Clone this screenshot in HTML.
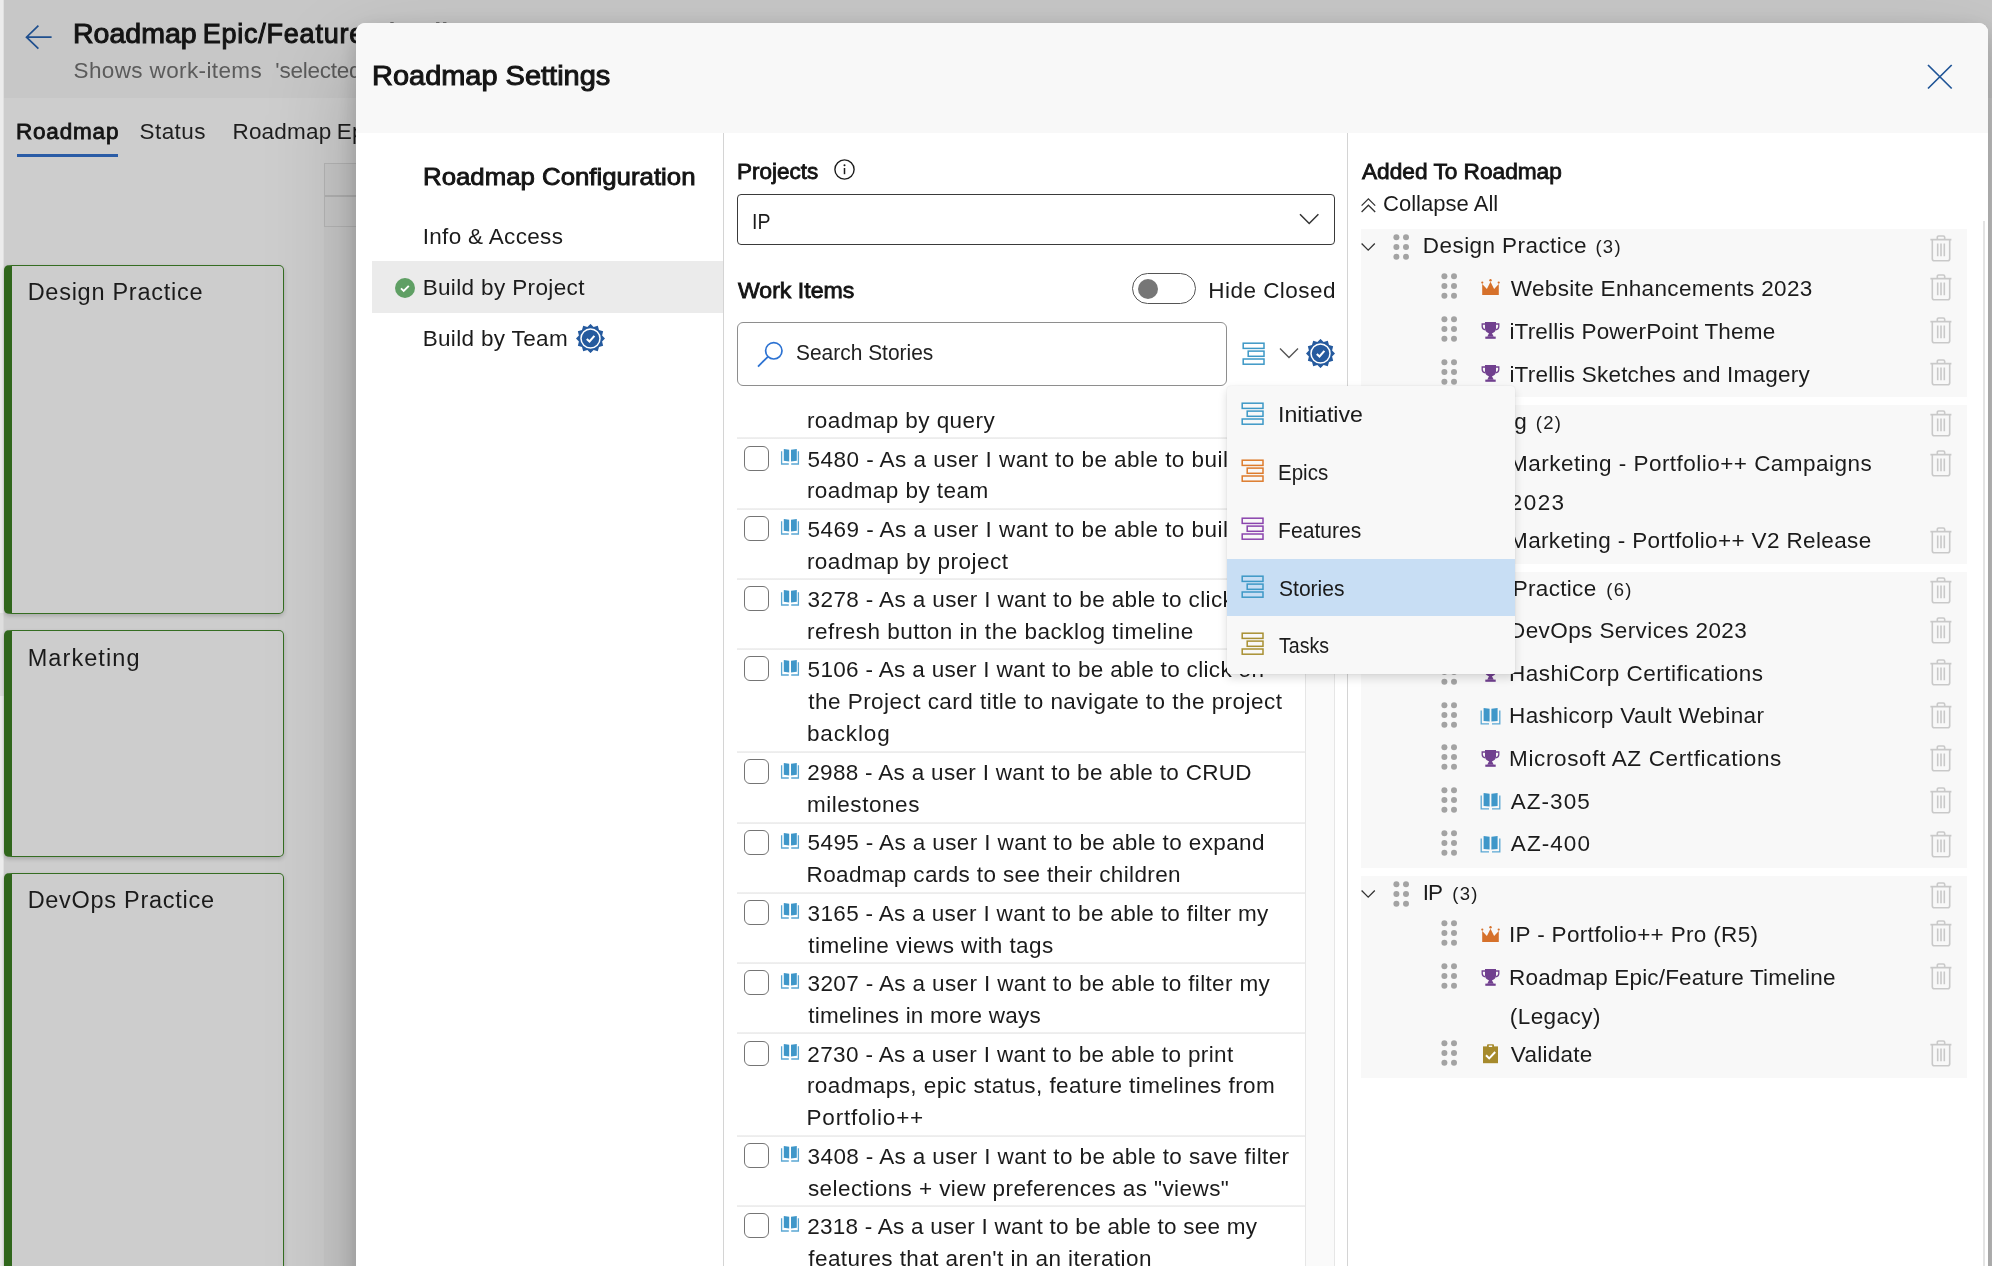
<!DOCTYPE html>
<html lang="en"><head><meta charset="utf-8"><title>Roadmap Settings</title>
<style>
html,body{margin:0;padding:0}
body{width:1992px;height:1266px;overflow:hidden;background:#cdcdcd;font-family:"Liberation Sans", Arial, sans-serif;position:relative;color:#1b1b1b}
.t{position:absolute;white-space:pre;}
.i{position:absolute;overflow:visible}
.cnt{font-size:18px;margin-left:11px;letter-spacing:0}
#bgclip,#panel,#dropdown{position:absolute;left:0;top:0;width:1992px;height:1266px;overflow:hidden}
.g{position:absolute;left:0;top:0;width:1992px;height:1266px;will-change:transform}
</style></head>
<body>

<svg width="0" height="0" style="position:absolute">
<defs>
<symbol id="lvl" viewBox="0 0 27 27"><g fill="none" stroke="currentColor" stroke-width="1.5"><rect x="3.2" y="3.2" width="20.8" height="5.2"/><rect x="8.2" y="11.1" width="15.8" height="5.2"/><rect x="3.2" y="19" width="20.8" height="5.2"/></g></symbol>
<symbol id="badge" viewBox="0 0 29 29"><path fill="#255a9e" d="M14.50 -0.10 L17.61 2.91 L21.80 1.86 L22.99 6.01 L27.14 7.20 L26.09 11.39 L29.10 14.50 L26.09 17.61 L27.14 21.80 L22.99 22.99 L21.80 27.14 L17.61 26.09 L14.50 29.10 L11.39 26.09 L7.20 27.14 L6.01 22.99 L1.86 21.80 L2.91 17.61 L-0.10 14.50 L2.91 11.39 L1.86 7.20 L6.01 6.01 L7.20 1.86 L11.39 2.91z"/><circle cx="14.500" cy="14.500" r="9.500" fill="none" stroke="#fff" stroke-width="1.500"/><path d="M10.800 14.900 13.500 17.400 18.400 11.900" fill="none" stroke="#fff" stroke-width="2.100"/></symbol>
<symbol id="book" viewBox="0 0 20 18"><path d="M1.6 3.2V16h7.2M18.4 3.2V16h-7.2" fill="none" stroke="#5aa7d3" stroke-width="1.3"/><path d="M3.800 1 9.200 1.700V13.500L3.800 12.800z" fill="#3f97c9"/><path d="M16.800 1 11 1.700V13.500l5.800-.700z" fill="#3f97c9"/></symbol>
<symbol id="book2" viewBox="0 0 23 21"><path d="M2.200 4.600V17.800h7.800M20.800 4.600V17.800h-7.800" fill="none" stroke="#5aa7d3" stroke-width="1.300"/><path d="M4.600 2 10.600 2.700V15.600L4.600 14.900z" fill="#3f97c9"/><path d="M18.600 2 12.400 2.700V15.600l6.200-.700z" fill="#3f97c9"/></symbol>
<symbol id="crown" viewBox="0 0 23 21"><path fill="#d6712b" d="M3.200 18V7l4.700 5 3.600-7.200 3.600 7.200 4.700-5V18z"/><circle cx="3.300" cy="5.600" r="1.100" fill="#d6712b"/><circle cx="11.500" cy="3.200" r="1.200" fill="#d6712b"/><circle cx="19.700" cy="5.600" r="1.100" fill="#d6712b"/></symbol>
<symbol id="trophy" viewBox="0 0 23 21"><path fill="#71408f" d="M6 2h11v6.2c0 3-2.3 5.2-5.500 5.200S6 11.200 6 8.200z"/><path d="M6 4H3.200v2.600c0 1.800 1.300 3 3.200 3.200M17 4h2.800v2.600c0 1.800-1.300 3-3.200 3.200" fill="none" stroke="#71408f" stroke-width="1.3"/><path fill="#71408f" d="M10.300 12.500h2.400l2 4.300H8.300z"/><rect x="6.300" y="16.600" width="10.400" height="2.200" fill="#71408f"/></symbol>
<symbol id="task" viewBox="0 0 23 21"><rect x="4" y="3.400" width="15" height="16.800" fill="#a68a2c"/><rect x="8" y="1.200" width="7" height="4" rx="1" fill="#a68a2c"/><rect x="9.800" y="2.500" width="3.400" height="1.500" fill="#f8f8f8"/><path d="M7 12.200 10.200 15.400 16.200 9" fill="none" stroke="#fff" stroke-width="2"/></symbol>
<symbol id="grip" viewBox="0 0 18 28"><g fill="#a3a3a3"><circle cx="4.400" cy="4.200" r="3"/><circle cx="14" cy="4.200" r="3"/><circle cx="4.400" cy="14" r="3"/><circle cx="14" cy="14" r="3"/><circle cx="4.400" cy="23.800" r="3"/><circle cx="14" cy="23.800" r="3"/></g></symbol>
<symbol id="trash" viewBox="0 0 26 30"><g fill="none" stroke="#c9c9c9" stroke-width="1.600"><path d="M2.400 4.600h21M9.300 4.600V2.400q0-1.400 1.400-1.400h4.600q1.400 0 1.400 1.400v2.200M4.300 4.600V23.800q0 2 2 2h13.400q2 0 2-2V4.600"/><path d="M9.700 8.400v12.800M13 8.400v12.800M16.300 8.400v12.800"/></g></symbol>
</defs></svg>

<div id="bgclip">
<div style="position:absolute;left:0px;top:0px;width:1992px;height:98px;background:#c7c7c7"></div>
<div style="position:absolute;left:0px;top:0px;width:4px;height:1266px;background:linear-gradient(90deg,#ececec 0,#ececec 3px,#e0e0e0 3px)"></div>
<div style="position:absolute;left:0px;top:613px;width:4px;height:83px;background:linear-gradient(90deg,#dedede 0,#dedede 3px,#d6d6d6 3px)"></div>
<svg class="i" style="left:22.800px;top:22px" width="32" height="32" viewBox="0 0 32 32"><path d="M28.600 15.150H3.800M15.400 3.700 3.500 15.150 15.400 26.600" fill="none" stroke="#1f4f8e" stroke-width="1.700"/></svg>
<div style="position:absolute;left:17px;top:154px;width:101px;height:3px;background:#2a5ca6"></div>
<div style="position:absolute;left:324px;top:163px;width:60px;height:1110px;background:#c8c8c8"></div>
<div style="position:absolute;left:324px;top:163px;width:60px;height:64px;box-sizing:border-box;border:1px solid #b6b6b6;border-right:0"></div>
<div style="position:absolute;left:325px;top:194.5px;width:60px;height:2px;background:#b2b2b2"></div>
<div style="position:absolute;left:4px;top:265px;width:280px;height:349px;box-sizing:border-box;border:1px solid #356d22;border-left:8px solid #30661c;border-radius:5px;background:#cdcdcd;box-shadow:0 2px 4px rgba(0,0,0,.18)"></div>
<div style="position:absolute;left:4px;top:630px;width:280px;height:227px;box-sizing:border-box;border:1px solid #356d22;border-left:8px solid #30661c;border-radius:5px;background:#cdcdcd;box-shadow:0 2px 4px rgba(0,0,0,.18)"></div>
<div style="position:absolute;left:4px;top:873px;width:280px;height:420px;box-sizing:border-box;border:1px solid #356d22;border-left:8px solid #30661c;border-radius:5px;background:#cdcdcd;box-shadow:0 2px 4px rgba(0,0,0,.18)"></div>
<div class="g">
<span class="t" id="t0" style="left:72.59px;top:19px;font-size:27px;line-height:30px;-webkit-text-stroke:1.00px currentColor;color:#141414;transform:scaleX(1.0565);transform-origin:0 50%;">Roadmap</span>
<span class="t" id="t1" style="left:202.69px;top:19px;font-size:27px;line-height:30px;-webkit-text-stroke:1.00px currentColor;color:#141414;letter-spacing:0.770px;">Epic/Feature Timeline</span>
<span class="t" id="t2" style="left:73.60px;top:58px;font-size:22.5px;line-height:25px;color:#5b5b5b;letter-spacing:0.371px;">Shows work-items</span>
<span class="t" id="t3" style="left:275.35px;top:58px;font-size:22.5px;line-height:25px;color:#5b5b5b;letter-spacing:-0.250px;">'selected' for</span>
<span class="t" id="t4" style="left:15.94px;top:119px;font-size:22.5px;line-height:25px;-webkit-text-stroke:0.83px currentColor;color:#141414;letter-spacing:0.819px;">Roadmap</span>
<span class="t" id="t5" style="left:139.50px;top:119px;font-size:22.5px;line-height:25px;color:#1e1e1e;letter-spacing:0.444px;">Status</span>
<span class="t" id="t6" style="left:232.44px;top:119px;font-size:22.5px;line-height:25px;color:#1e1e1e;letter-spacing:0.202px;">Roadmap</span>
<span class="t" id="t7" style="left:336.64px;top:119px;font-size:22.5px;line-height:25px;color:#1e1e1e;letter-spacing:0.330px;">Epic</span>
<span class="t" id="t8" style="left:27.66px;top:279px;font-size:23.5px;line-height:26px;letter-spacing:0.730px;">Design Practice</span>
<span class="t" id="t9" style="left:27.66px;top:645px;font-size:23.5px;line-height:26px;letter-spacing:1.084px;">Marketing</span>
<span class="t" id="t10" style="left:27.66px;top:887px;font-size:23.5px;line-height:26px;letter-spacing:0.713px;">DevOps Practice</span>
</div>
</div>
<div id="panel">
<div style="position:absolute;left:356px;top:23px;width:1632px;height:1300px;background:#fff;border-radius:9px 9px 0 0;box-shadow:0 40px 90px rgba(0,0,0,.22),0 7.500px 22.600px rgba(0,0,0,.18)"></div>
<div style="position:absolute;left:356px;top:23px;width:1632px;height:110px;background:#f8f8f8;border-radius:9px 9px 0 0"></div>
<svg class="i" style="left:1923.700px;top:61.300px" width="32" height="32" viewBox="0 0 32 32"><path d="M4 4 27.700 27.500M27.700 4 4 27.500" fill="none" stroke="#1f5496" stroke-width="1.700"/></svg>
<div style="position:absolute;left:723px;top:133px;width:1px;height:1140px;background:#d4d4d4"></div>
<div style="position:absolute;left:1347px;top:133px;width:1px;height:1140px;background:#d4d4d4"></div>
<div style="position:absolute;left:372px;top:261px;width:351px;height:52px;background:#ebebeb"></div>
<svg class="i" style="left:394px;top:276.600px" width="22" height="22" viewBox="0 0 22 22"><circle cx="11" cy="11" r="10" fill="#5f9f64"/><path d="M7 11.400 9.700 14 14.800 8.800" fill="none" stroke="#fff" stroke-width="1.900"/></svg>
<svg class="i" style="left:576.2px;top:323.6px" width="29" height="29"><use href="#badge"/></svg>
<svg class="i" style="left:833px;top:157.700px" width="24" height="24" viewBox="0 0 24 24"><circle cx="11.500" cy="11.500" r="9.600" fill="none" stroke="#1b1b1b" stroke-width="1.400"/><path d="M11.500 10v6.200" stroke="#1b1b1b" stroke-width="1.500"/><circle cx="11.500" cy="7.300" r="1" fill="#1b1b1b"/></svg>
<div style="position:absolute;left:737px;top:194px;width:598px;height:51px;box-sizing:border-box;border:1.400px solid #3a3a3a;border-radius:4px;background:#fff"></div>
<svg class="i" style="left:1296px;top:209px" width="26" height="20" viewBox="0 0 26 20"><path d="M4 5.200 13.200 14.500 22.400 5.200" fill="none" stroke="#333" stroke-width="1.500"/></svg>
<div style="position:absolute;left:1132px;top:273px;width:64px;height:31px;box-sizing:border-box;border:1.400px solid #555;border-radius:16px;background:#fff"></div>
<div style="position:absolute;left:1138px;top:278.5px;width:20px;height:20px;border-radius:50%;background:#767676"></div>
<div style="position:absolute;left:737px;top:322px;width:490px;height:64px;box-sizing:border-box;border:1px solid #8e8e8e;border-radius:6px;background:#fff"></div>
<svg class="i" style="left:754px;top:338px" width="32" height="32" viewBox="0 0 32 32"><circle cx="19.800" cy="12.800" r="8.200" fill="none" stroke="#2c72d2" stroke-width="1.700"/><path d="M13.800 18.800 4 28.600" stroke="#2c72d2" stroke-width="1.800"/></svg>
<svg class="i" style="left:1240px;top:340px;color:#3d98c6" width="27" height="27"><use href="#lvl"/></svg>
<svg class="i" style="left:1276px;top:343px" width="26" height="20" viewBox="0 0 26 20"><path d="M4 5.500 13 14.500 22 5.500" fill="none" stroke="#555" stroke-width="1.400"/></svg>
<svg class="i" style="left:1306px;top:339px" width="29" height="29"><use href="#badge"/></svg>
<div style="position:absolute;left:1305px;top:386px;width:30px;height:900px;box-sizing:border-box;background:#fafafa;border-left:1px solid #e6e6e6;border-right:1px solid #e6e6e6"></div>
<div style="position:absolute;left:737px;top:437px;width:568px;height:2px;background:linear-gradient(#f1f1f1,#ebebeb)"></div>
<div style="position:absolute;left:744px;top:445.6px;width:25px;height:25px;box-sizing:border-box;border:1.300px solid #757575;border-radius:6px;background:#fff"></div>
<svg class="i" style="left:780px;top:448.1px" width="20" height="18"><use href="#book"/></svg>
<div style="position:absolute;left:737px;top:508px;width:568px;height:2px;background:linear-gradient(#f1f1f1,#ebebeb)"></div>
<div style="position:absolute;left:744px;top:515.8px;width:25px;height:25px;box-sizing:border-box;border:1.300px solid #757575;border-radius:6px;background:#fff"></div>
<svg class="i" style="left:780px;top:518.3px" width="20" height="18"><use href="#book"/></svg>
<div style="position:absolute;left:737px;top:578px;width:568px;height:2px;background:linear-gradient(#f1f1f1,#ebebeb)"></div>
<div style="position:absolute;left:744px;top:586.0px;width:25px;height:25px;box-sizing:border-box;border:1.300px solid #757575;border-radius:6px;background:#fff"></div>
<svg class="i" style="left:780px;top:588.5px" width="20" height="18"><use href="#book"/></svg>
<div style="position:absolute;left:737px;top:648px;width:568px;height:2px;background:linear-gradient(#f1f1f1,#ebebeb)"></div>
<div style="position:absolute;left:744px;top:656.2px;width:25px;height:25px;box-sizing:border-box;border:1.300px solid #757575;border-radius:6px;background:#fff"></div>
<svg class="i" style="left:780px;top:658.7px" width="20" height="18"><use href="#book"/></svg>
<div style="position:absolute;left:737px;top:751px;width:568px;height:2px;background:linear-gradient(#f1f1f1,#ebebeb)"></div>
<div style="position:absolute;left:744px;top:759.3px;width:25px;height:25px;box-sizing:border-box;border:1.300px solid #757575;border-radius:6px;background:#fff"></div>
<svg class="i" style="left:780px;top:761.8px" width="20" height="18"><use href="#book"/></svg>
<div style="position:absolute;left:737px;top:822px;width:568px;height:2px;background:linear-gradient(#f1f1f1,#ebebeb)"></div>
<div style="position:absolute;left:744px;top:829.5px;width:25px;height:25px;box-sizing:border-box;border:1.300px solid #757575;border-radius:6px;background:#fff"></div>
<svg class="i" style="left:780px;top:832.0px" width="20" height="18"><use href="#book"/></svg>
<div style="position:absolute;left:737px;top:892px;width:568px;height:2px;background:linear-gradient(#f1f1f1,#ebebeb)"></div>
<div style="position:absolute;left:744px;top:899.7px;width:25px;height:25px;box-sizing:border-box;border:1.300px solid #757575;border-radius:6px;background:#fff"></div>
<svg class="i" style="left:780px;top:902.2px" width="20" height="18"><use href="#book"/></svg>
<div style="position:absolute;left:737px;top:962px;width:568px;height:2px;background:linear-gradient(#f1f1f1,#ebebeb)"></div>
<div style="position:absolute;left:744px;top:969.9px;width:25px;height:25px;box-sizing:border-box;border:1.300px solid #757575;border-radius:6px;background:#fff"></div>
<svg class="i" style="left:780px;top:972.4px" width="20" height="18"><use href="#book"/></svg>
<div style="position:absolute;left:737px;top:1032px;width:568px;height:2px;background:linear-gradient(#f1f1f1,#ebebeb)"></div>
<div style="position:absolute;left:744px;top:1040.5px;width:25px;height:25px;box-sizing:border-box;border:1.300px solid #757575;border-radius:6px;background:#fff"></div>
<svg class="i" style="left:780px;top:1043.0px" width="20" height="18"><use href="#book"/></svg>
<div style="position:absolute;left:737px;top:1135px;width:568px;height:2px;background:linear-gradient(#f1f1f1,#ebebeb)"></div>
<div style="position:absolute;left:744px;top:1142.6px;width:25px;height:25px;box-sizing:border-box;border:1.300px solid #757575;border-radius:6px;background:#fff"></div>
<svg class="i" style="left:780px;top:1145.1px" width="20" height="18"><use href="#book"/></svg>
<div style="position:absolute;left:737px;top:1205px;width:568px;height:2px;background:linear-gradient(#f1f1f1,#ebebeb)"></div>
<div style="position:absolute;left:744px;top:1212.7px;width:25px;height:25px;box-sizing:border-box;border:1.300px solid #757575;border-radius:6px;background:#fff"></div>
<svg class="i" style="left:780px;top:1215.2px" width="20" height="18"><use href="#book"/></svg>
<div style="position:absolute;left:737px;top:1275px;width:568px;height:2px;background:linear-gradient(#f1f1f1,#ebebeb)"></div>
<svg class="i" style="left:1358.500px;top:194.500px" width="20" height="20" viewBox="0 0 20 20"><path d="M2.600 10.600 9.400 3.800 16.200 10.600M2.600 17 9.400 10.200 16.200 17" fill="none" stroke="#333" stroke-width="1.300"/></svg>
<div style="position:absolute;left:1983px;top:221px;width:2px;height:1050px;background:#e4e4e4"></div>
<div style="position:absolute;left:1361px;top:229px;width:606px;height:168px;background:#f8f8f8"></div>
<svg class="i" style="left:1360px;top:239.5px" width="18" height="14" viewBox="0 0 18 14"><path d="M1.600 3.500 8.200 10.100 14.800 3.500" fill="none" stroke="#333" stroke-width="1.300"/></svg>
<svg class="i" style="left:1392.3px;top:233.1px" width="18" height="28"><use href="#grip"/></svg>
<svg class="i" style="left:1928px;top:234.5px" width="26" height="30"><use href="#trash"/></svg>
<svg class="i" style="left:1440.2px;top:272.1px" width="18" height="28"><use href="#grip"/></svg>
<svg class="i" style="left:1479px;top:276.90000000000003px" width="23" height="21"><use href="#crown"/></svg>
<svg class="i" style="left:1928px;top:273.5px" width="26" height="30"><use href="#trash"/></svg>
<svg class="i" style="left:1440.2px;top:315.1px" width="18" height="28"><use href="#grip"/></svg>
<svg class="i" style="left:1479px;top:319.90000000000003px" width="23" height="21"><use href="#trophy"/></svg>
<svg class="i" style="left:1928px;top:316.5px" width="26" height="30"><use href="#trash"/></svg>
<svg class="i" style="left:1440.2px;top:358px" width="18" height="28"><use href="#grip"/></svg>
<svg class="i" style="left:1479px;top:362.8px" width="23" height="21"><use href="#trophy"/></svg>
<svg class="i" style="left:1928px;top:359.4px" width="26" height="30"><use href="#trash"/></svg>
<div style="position:absolute;left:1361px;top:405px;width:606px;height:159px;background:#f8f8f8"></div>
<svg class="i" style="left:1360px;top:414.5px" width="18" height="14" viewBox="0 0 18 14"><path d="M1.600 3.500 8.200 10.100 14.800 3.500" fill="none" stroke="#333" stroke-width="1.300"/></svg>
<svg class="i" style="left:1392.3px;top:408.1px" width="18" height="28"><use href="#grip"/></svg>
<svg class="i" style="left:1928px;top:409.5px" width="26" height="30"><use href="#trash"/></svg>
<svg class="i" style="left:1440.2px;top:448.3px" width="18" height="28"><use href="#grip"/></svg>
<svg class="i" style="left:1479px;top:453.1px" width="23" height="21"><use href="#crown"/></svg>
<svg class="i" style="left:1928px;top:449.7px" width="26" height="30"><use href="#trash"/></svg>
<svg class="i" style="left:1440.2px;top:525.2px" width="18" height="28"><use href="#grip"/></svg>
<svg class="i" style="left:1479px;top:530.0000000000001px" width="23" height="21"><use href="#crown"/></svg>
<svg class="i" style="left:1928px;top:526.6px" width="26" height="30"><use href="#trash"/></svg>
<div style="position:absolute;left:1361px;top:572px;width:606px;height:296px;background:#f8f8f8"></div>
<svg class="i" style="left:1360px;top:581.5px" width="18" height="14" viewBox="0 0 18 14"><path d="M1.600 3.500 8.200 10.100 14.800 3.500" fill="none" stroke="#333" stroke-width="1.300"/></svg>
<svg class="i" style="left:1392.3px;top:575.1px" width="18" height="28"><use href="#grip"/></svg>
<svg class="i" style="left:1928px;top:576.5px" width="26" height="30"><use href="#trash"/></svg>
<svg class="i" style="left:1440.2px;top:615.1px" width="18" height="28"><use href="#grip"/></svg>
<svg class="i" style="left:1479px;top:619.9000000000001px" width="23" height="21"><use href="#crown"/></svg>
<svg class="i" style="left:1928px;top:616.5px" width="26" height="30"><use href="#trash"/></svg>
<svg class="i" style="left:1440.2px;top:658px" width="18" height="28"><use href="#grip"/></svg>
<svg class="i" style="left:1479px;top:662.8000000000001px" width="23" height="21"><use href="#trophy"/></svg>
<svg class="i" style="left:1928px;top:659.4px" width="26" height="30"><use href="#trash"/></svg>
<svg class="i" style="left:1440.2px;top:700.9px" width="18" height="28"><use href="#grip"/></svg>
<svg class="i" style="left:1479px;top:705.7px" width="23" height="21"><use href="#book2"/></svg>
<svg class="i" style="left:1928px;top:702.3px" width="26" height="30"><use href="#trash"/></svg>
<svg class="i" style="left:1440.2px;top:743.4px" width="18" height="28"><use href="#grip"/></svg>
<svg class="i" style="left:1479px;top:748.2px" width="23" height="21"><use href="#trophy"/></svg>
<svg class="i" style="left:1928px;top:744.8px" width="26" height="30"><use href="#trash"/></svg>
<svg class="i" style="left:1440.2px;top:786px" width="18" height="28"><use href="#grip"/></svg>
<svg class="i" style="left:1479px;top:790.8000000000001px" width="23" height="21"><use href="#book2"/></svg>
<svg class="i" style="left:1928px;top:787.4px" width="26" height="30"><use href="#trash"/></svg>
<svg class="i" style="left:1440.2px;top:829.1px" width="18" height="28"><use href="#grip"/></svg>
<svg class="i" style="left:1479px;top:833.9000000000001px" width="23" height="21"><use href="#book2"/></svg>
<svg class="i" style="left:1928px;top:830.5px" width="26" height="30"><use href="#trash"/></svg>
<div style="position:absolute;left:1361px;top:876px;width:606px;height:202px;background:#f8f8f8"></div>
<svg class="i" style="left:1360px;top:886.7px" width="18" height="14" viewBox="0 0 18 14"><path d="M1.600 3.500 8.200 10.100 14.800 3.500" fill="none" stroke="#333" stroke-width="1.300"/></svg>
<svg class="i" style="left:1392.3px;top:880.3px" width="18" height="28"><use href="#grip"/></svg>
<svg class="i" style="left:1928px;top:881.6999999999999px" width="26" height="30"><use href="#trash"/></svg>
<svg class="i" style="left:1440.2px;top:918.8px" width="18" height="28"><use href="#grip"/></svg>
<svg class="i" style="left:1479px;top:923.6px" width="23" height="21"><use href="#crown"/></svg>
<svg class="i" style="left:1928px;top:920.1999999999999px" width="26" height="30"><use href="#trash"/></svg>
<svg class="i" style="left:1440.2px;top:962px" width="18" height="28"><use href="#grip"/></svg>
<svg class="i" style="left:1479px;top:966.8000000000001px" width="23" height="21"><use href="#trophy"/></svg>
<svg class="i" style="left:1928px;top:963.4px" width="26" height="30"><use href="#trash"/></svg>
<svg class="i" style="left:1440.2px;top:1038.5px" width="18" height="28"><use href="#grip"/></svg>
<svg class="i" style="left:1479px;top:1043.3px" width="23" height="21"><use href="#task"/></svg>
<svg class="i" style="left:1928px;top:1039.9px" width="26" height="30"><use href="#trash"/></svg>
<div class="g">
<span class="t" id="t11" style="left:371.79px;top:61px;font-size:27px;line-height:30px;-webkit-text-stroke:1.00px currentColor;color:#141414;transform:scaleX(1.0726);transform-origin:0 50%;">Roadmap Settings</span>
<span class="t" id="t12" style="left:422.82px;top:163px;font-size:24px;line-height:27px;-webkit-text-stroke:0.89px currentColor;color:#141414;transform:scaleX(1.0749);transform-origin:0 50%;">Roadmap Configuration</span>
<span class="t" id="t13" style="left:422.64px;top:224px;font-size:22.5px;line-height:25px;letter-spacing:0.333px;">Info &amp; Access</span>
<span class="t" id="t14" style="left:422.64px;top:275px;font-size:22.5px;line-height:25px;letter-spacing:0.364px;">Build by Project</span>
<span class="t" id="t15" style="left:422.64px;top:326px;font-size:22.5px;line-height:25px;letter-spacing:0.342px;">Build by Team</span>
<span class="t" id="t16" style="left:736.52px;top:160px;font-size:21.5px;line-height:24px;-webkit-text-stroke:0.80px currentColor;color:#141414;transform:scaleX(1.0463);transform-origin:0 50%;">Projects</span>
<span class="t" id="t17" style="left:751.62px;top:210px;font-size:21.5px;line-height:24px;transform:scaleX(0.9080);transform-origin:0 50%;">IP</span>
<span class="t" id="t18" style="left:737.80px;top:279px;font-size:21.5px;line-height:24px;-webkit-text-stroke:0.80px currentColor;color:#141414;transform:scaleX(1.0731);transform-origin:0 50%;">Work Items</span>
<span class="t" id="t19" style="left:1208.24px;top:278px;font-size:22.5px;line-height:25px;letter-spacing:0.476px;">Hide Closed</span>
<span class="t" id="t20" style="left:796.03px;top:341px;font-size:21.5px;line-height:24px;color:#222;transform:scaleX(0.9738);transform-origin:0 50%;">Search Stories</span>
<span class="t" id="t21" style="left:806.89px;top:408px;font-size:22.5px;line-height:25px;letter-spacing:0.430px;">roadmap by query</span>
<span class="t" id="t22" style="left:807.60px;top:447px;font-size:22.5px;line-height:25px;letter-spacing:0.460px;">5480 - As a user I want to be able to build a</span>
<span class="t" id="t23" style="left:806.89px;top:478px;font-size:22.5px;line-height:25px;letter-spacing:0.442px;">roadmap by team</span>
<span class="t" id="t24" style="left:807.60px;top:517px;font-size:22.5px;line-height:25px;letter-spacing:0.460px;">5469 - As a user I want to be able to build a</span>
<span class="t" id="t25" style="left:806.89px;top:549px;font-size:22.5px;line-height:25px;letter-spacing:0.496px;">roadmap by project</span>
<span class="t" id="t26" style="left:807.60px;top:587px;font-size:22.5px;line-height:25px;letter-spacing:0.380px;">3278 - As a user I want to be able to click the</span>
<span class="t" id="t27" style="left:806.89px;top:619px;font-size:22.5px;line-height:25px;letter-spacing:0.508px;">refresh button in the backlog timeline</span>
<span class="t" id="t28" style="left:807.60px;top:657px;font-size:22.5px;line-height:25px;letter-spacing:0.330px;">5106 - As a user I want to be able to click on</span>
<span class="t" id="t29" style="left:808.30px;top:689px;font-size:22.5px;line-height:25px;letter-spacing:0.461px;">the Project card title to navigate to the project</span>
<span class="t" id="t30" style="left:806.89px;top:721px;font-size:22.5px;line-height:25px;letter-spacing:0.886px;">backlog</span>
<span class="t" id="t31" style="left:807.25px;top:760px;font-size:22.5px;line-height:25px;letter-spacing:0.313px;">2988 - As a user I want to be able to CRUD</span>
<span class="t" id="t32" style="left:806.89px;top:792px;font-size:22.5px;line-height:25px;letter-spacing:0.552px;">milestones</span>
<span class="t" id="t33" style="left:807.60px;top:830px;font-size:22.5px;line-height:25px;letter-spacing:0.387px;">5495 - As a user I want to be able to expand</span>
<span class="t" id="t34" style="left:806.54px;top:862px;font-size:22.5px;line-height:25px;letter-spacing:0.370px;">Roadmap cards to see their children</span>
<span class="t" id="t35" style="left:807.60px;top:901px;font-size:22.5px;line-height:25px;letter-spacing:0.335px;">3165 - As a user I want to be able to filter my</span>
<span class="t" id="t36" style="left:808.30px;top:933px;font-size:22.5px;line-height:25px;letter-spacing:0.427px;">timeline views with tags</span>
<span class="t" id="t37" style="left:807.60px;top:971px;font-size:22.5px;line-height:25px;letter-spacing:0.370px;">3207 - As a user I want to be able to filter my</span>
<span class="t" id="t38" style="left:808.30px;top:1003px;font-size:22.5px;line-height:25px;letter-spacing:0.230px;">timelines in more ways</span>
<span class="t" id="t39" style="left:807.25px;top:1042px;font-size:22.5px;line-height:25px;letter-spacing:0.373px;">2730 - As a user I want to be able to print</span>
<span class="t" id="t40" style="left:806.89px;top:1073px;font-size:22.5px;line-height:25px;letter-spacing:0.430px;">roadmaps, epic status, feature timelines from</span>
<span class="t" id="t41" style="left:806.54px;top:1105px;font-size:22.5px;line-height:25px;letter-spacing:0.787px;">Portfolio++</span>
<span class="t" id="t42" style="left:807.60px;top:1144px;font-size:22.5px;line-height:25px;letter-spacing:0.390px;">3408 - As a user I want to be able to save filter</span>
<span class="t" id="t43" style="left:807.95px;top:1176px;font-size:22.5px;line-height:25px;letter-spacing:0.426px;">selections + view preferences as "views"</span>
<span class="t" id="t44" style="left:807.25px;top:1214px;font-size:22.5px;line-height:25px;letter-spacing:0.249px;">2318 - As a user I want to be able to see my</span>
<span class="t" id="t45" style="left:808.30px;top:1246px;font-size:22.5px;line-height:25px;letter-spacing:0.426px;">features that aren't in an iteration</span>
<span class="t" id="t46" style="left:1361.70px;top:160px;font-size:21.5px;line-height:24px;-webkit-text-stroke:0.80px currentColor;color:#141414;transform:scaleX(1.0535);transform-origin:0 50%;">Added To Roadmap</span>
<span class="t" id="t47" style="left:1382.79px;top:192px;font-size:21.5px;line-height:24px;transform:scaleX(1.0252);transform-origin:0 50%;">Collapse All</span>
<span class="t" id="t48" style="left:1422.84px;top:233px;font-size:22.5px;line-height:25px;letter-spacing:0.429px;">Design Practice</span>
<span class="t" id="t49" style="left:1595.43px;top:236px;font-size:18.5px;line-height:21px;letter-spacing:1.257px;">(3)</span>
<span class="t" id="t50" style="left:1510.80px;top:276px;font-size:22.5px;line-height:25px;letter-spacing:0.333px;">Website Enhancements 2023</span>
<span class="t" id="t51" style="left:1509.39px;top:319px;font-size:22.5px;line-height:25px;letter-spacing:0.186px;">iTrellis PowerPoint Theme</span>
<span class="t" id="t52" style="left:1509.39px;top:362px;font-size:22.5px;line-height:25px;letter-spacing:0.215px;">iTrellis Sketches and Imagery</span>
<span class="t" id="t53" style="left:1422.84px;top:409px;font-size:22.5px;line-height:25px;letter-spacing:0.642px;">Marketing</span>
<span class="t" id="t54" style="left:1535.83px;top:412px;font-size:18.5px;line-height:21px;letter-spacing:1.257px;">(2)</span>
<span class="t" id="t55" style="left:1509.04px;top:451px;font-size:22.5px;line-height:25px;letter-spacing:0.469px;">Marketing - Portfolio++ Campaigns</span>
<span class="t" id="t56" style="left:1509.75px;top:490px;font-size:22.5px;line-height:25px;letter-spacing:1.438px;">2023</span>
<span class="t" id="t57" style="left:1509.04px;top:528px;font-size:22.5px;line-height:25px;letter-spacing:0.363px;">Marketing - Portfolio++ V2 Release</span>
<span class="t" id="t58" style="left:1422.84px;top:576px;font-size:22.5px;line-height:25px;letter-spacing:0.326px;">DevOps Practice</span>
<span class="t" id="t59" style="left:1606.23px;top:579px;font-size:18.5px;line-height:21px;letter-spacing:1.257px;">(6)</span>
<span class="t" id="t60" style="left:1509.04px;top:618px;font-size:22.5px;line-height:25px;letter-spacing:0.403px;">DevOps Services 2023</span>
<span class="t" id="t61" style="left:1509.04px;top:661px;font-size:22.5px;line-height:25px;letter-spacing:0.494px;">HashiCorp Certifications</span>
<span class="t" id="t62" style="left:1509.04px;top:703px;font-size:22.5px;line-height:25px;letter-spacing:0.372px;">Hashicorp Vault Webinar</span>
<span class="t" id="t63" style="left:1509.04px;top:746px;font-size:22.5px;line-height:25px;letter-spacing:0.640px;">Microsoft AZ Certfications</span>
<span class="t" id="t64" style="left:1510.80px;top:789px;font-size:22.5px;line-height:25px;letter-spacing:1.026px;">AZ-305</span>
<span class="t" id="t65" style="left:1510.80px;top:831px;font-size:22.5px;line-height:25px;letter-spacing:1.075px;">AZ-400</span>
<span class="t" id="t66" style="left:1422.84px;top:880px;font-size:22.5px;line-height:25px;letter-spacing:-1.056px;">IP</span>
<span class="t" id="t67" style="left:1452.33px;top:883px;font-size:18.5px;line-height:21px;letter-spacing:1.257px;">(3)</span>
<span class="t" id="t68" style="left:1509.04px;top:922px;font-size:22.5px;line-height:25px;letter-spacing:0.337px;">IP - Portfolio++ Pro (R5)</span>
<span class="t" id="t69" style="left:1509.04px;top:965px;font-size:22.5px;line-height:25px;letter-spacing:0.177px;">Roadmap Epic/Feature Timeline</span>
<span class="t" id="t70" style="left:1509.75px;top:1004px;font-size:22.5px;line-height:25px;letter-spacing:0.440px;">(Legacy)</span>
<span class="t" id="t71" style="left:1510.80px;top:1042px;font-size:22.5px;line-height:25px;letter-spacing:0.267px;">Validate</span>
</div>
</div>
<div id="dropdown">
<div style="position:absolute;left:1227px;top:386px;width:288px;height:288px;background:#f8f8f8;border-radius:4px;box-shadow:0 4px 10px rgba(0,0,0,.14),0 0 2px rgba(0,0,0,.1)"></div>
<div style="position:absolute;left:1227px;top:559px;width:288px;height:57px;background:#c8def4"></div>
<svg class="i" style="left:1239px;top:399.9px;color:#3d98c6" width="27" height="27"><use href="#lvl"/></svg>
<svg class="i" style="left:1239px;top:457.09999999999997px;color:#dd7b2c" width="27" height="27"><use href="#lvl"/></svg>
<svg class="i" style="left:1239px;top:514.9px;color:#8a44ad" width="27" height="27"><use href="#lvl"/></svg>
<svg class="i" style="left:1239px;top:573.1px;color:#3d98c6" width="27" height="27"><use href="#lvl"/></svg>
<svg class="i" style="left:1239px;top:630.1px;color:#a89033" width="27" height="27"><use href="#lvl"/></svg>
<div class="g">
<span class="t" id="t72" style="left:1277.52px;top:403px;font-size:21.5px;line-height:24px;transform:scaleX(1.0770);transform-origin:0 50%;">Initiative</span>
<span class="t" id="t73" style="left:1277.52px;top:461px;font-size:21.5px;line-height:24px;transform:scaleX(0.9538);transform-origin:0 50%;">Epics</span>
<span class="t" id="t74" style="left:1277.52px;top:519px;font-size:21.5px;line-height:24px;transform:scaleX(0.9819);transform-origin:0 50%;">Features</span>
<span class="t" id="t75" style="left:1278.53px;top:577px;font-size:21.5px;line-height:24px;transform:scaleX(0.9791);transform-origin:0 50%;">Stories</span>
<span class="t" id="t76" style="left:1278.86px;top:634px;font-size:21.5px;line-height:24px;transform:scaleX(0.9101);transform-origin:0 50%;">Tasks</span>
</div>
</div>
</body></html>
